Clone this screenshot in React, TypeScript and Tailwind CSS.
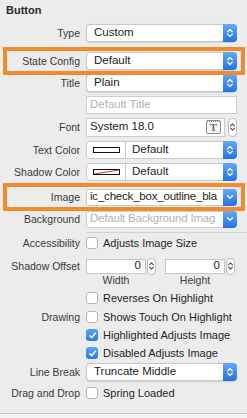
import React from "react";

const FONT = { fontFamily: '"Liberation Sans", Arial, sans-serif' };

function UpDown({ color = "white", w = 8, h = 12 }: { color?: string; w?: number; h?: number }) {
  return (
    <svg width={w} height={h} viewBox="0 0 8 12" fill="none">
      <path d="M1.8 4.8 L4 2.4 L6.2 4.8" stroke={color} strokeWidth="1.3" strokeLinecap="round" strokeLinejoin="round" />
      <path d="M1.8 7.2 L4 9.6 L6.2 7.2" stroke={color} strokeWidth="1.3" strokeLinecap="round" strokeLinejoin="round" />
    </svg>
  );
}

function Down() {
  return (
    <svg width="8" height="8" viewBox="0 0 8 8" fill="none">
      <path d="M1.6 2.8 L4 5.2 L6.4 2.8" stroke="white" strokeWidth="1.4" strokeLinecap="round" strokeLinejoin="round" />
    </svg>
  );
}

function BlueBtn({ single = false }: { single?: boolean }) {
  return (
    <div className="w-[14px] shrink-0 self-stretch -my-px -mr-px rounded-r-[4px] bg-gradient-to-b from-[#62a9fb] to-[#1f72ea] flex items-center justify-center">
      {single ? <Down /> : <UpDown />}
    </div>
  );
}

function Label({ children }: { children?: React.ReactNode }) {
  return (
    <div className="w-[80px] shrink-0 text-right text-[10.5px] text-[#3a3a3a] whitespace-nowrap leading-none">
      {children}
    </div>
  );
}

function Popup({ text, h = 18 }: { text: string; h?: number }) {
  return (
    <div
      className="ml-[6px] w-[151px] flex items-stretch bg-white border border-[#c9c9c9] rounded-[4px] shadow-[0_0.5px_1px_rgba(0,0,0,0.12)]"
      style={{ height: h }}
    >
      <div className="flex-1 flex items-center pl-[7px] text-[11.5px] text-[#1e1e1e] overflow-hidden whitespace-nowrap">{text}</div>
      <BlueBtn />
    </div>
  );
}

function SmallStepper({ h = 18 }: { h?: number }) {
  return (
    <div
      className="w-[9px] bg-white border border-[#bdbdbd] rounded-[4px] flex items-center justify-center"
      style={{ height: h }}
    >
      <UpDown color="#555" w={7} h={12} />
    </div>
  );
}

function Check({ checked = false }: { checked?: boolean }) {
  if (checked) {
    return (
      <div className="w-[12px] h-[12px] rounded-[3px] bg-gradient-to-b from-[#5aa3fa] to-[#2479ee] flex items-center justify-center shrink-0">
        <svg width="9" height="9" viewBox="0 0 9 9" fill="none">
          <path d="M1.8 4.8 L3.7 6.7 L7.2 2.2" stroke="white" strokeWidth="1.5" strokeLinecap="round" strokeLinejoin="round" />
        </svg>
      </div>
    );
  }
  return <div className="w-[12px] h-[12px] rounded-[3px] bg-white border border-[#b5b5b5] shrink-0" />;
}

function CheckRow({ label, text, checked, cls }: { label?: string; text: string; checked?: boolean; cls: string }) {
  return (
    <div className={`flex items-center ${cls}`}>
      <Label>{label}</Label>
      <div className="ml-[6px] flex items-center">
        <Check checked={checked} />
        <span className="ml-[5px] text-[11px] text-[#1e1e1e] whitespace-nowrap leading-none">{text}</span>
      </div>
    </div>
  );
}

function Highlight() {
  return (
    <div className="absolute left-[3px] right-[2px] -top-[4px] -bottom-[4px] border-[4px] border-[#f58a2b] pointer-events-none" />
  );
}

function ColorRow({ label, cls, none = false }: { label: string; cls: string; none?: boolean }) {
  return (
    <div className={`flex items-center ${cls}`}>
      <Label>{label}</Label>
      <div className="ml-[6px] w-[151px] h-[18px] flex items-stretch bg-white border border-[#c9c9c9] rounded-[4px]">
        <div className="w-[39px] flex items-center justify-center border-r border-[#c9c9c9]">
          <div className="relative w-[27px] h-[6px] border border-[#111] bg-white overflow-hidden">
            {none && (
              <svg className="absolute inset-0" width="25" height="4" viewBox="0 0 25 4" preserveAspectRatio="none">
                <line x1="0" y1="4" x2="25" y2="0" stroke="#e0303a" strokeWidth="1" />
              </svg>
            )}
          </div>
        </div>
        <div className="flex-1 flex items-center pl-[6px] text-[11.5px] text-[#1e1e1e]">Default</div>
        <BlueBtn />
      </div>
    </div>
  );
}

function OffsetField() {
  return (
    <div className="flex items-center">
      <div className="w-[60px] h-[15px] bg-white border border-[#c6c6c6] flex items-center justify-end pr-[4px] text-[11.5px] text-[#1e1e1e] leading-none">0</div>
      <div className="ml-[1px]">
        <SmallStepper h={17} />
      </div>
    </div>
  );
}

export default function App() {
  return (
    <div className="w-[247px] h-[418px] overflow-hidden bg-[#ececec] flex flex-col" style={FONT}>
      <div className="h-[20px] flex items-center pl-[6px] text-[11px] font-bold text-[#2a2a2a]">Button</div>

      <div className="flex items-center h-[20px] mt-[3px]">
        <Label>Type</Label>
        <Popup text="Custom" />
      </div>

      <div className="relative flex items-center h-[20px] mt-[8px]">
        <Label>State Config</Label>
        <Popup text="Default" />
        <Highlight />
      </div>

      <div className="flex items-center h-[20px] mt-[2px]">
        <Label>Title</Label>
        <Popup text="Plain" />
      </div>

      <div className="flex items-center h-[20px] mt-[2px]">
        <Label></Label>
        <div className="ml-[6px] w-[151px] h-[18px] bg-white border border-[#cdcdcd] flex items-center pl-[3px] text-[11.5px] text-[#b3b3b3] whitespace-nowrap">
          Default Title
        </div>
      </div>

      <div className="flex items-center h-[20px] mt-[2px]">
        <Label>Font</Label>
        <div className="ml-[6px] w-[139px] h-[19px] bg-white border border-[#cdcdcd] flex items-center pl-[3px] pr-[3px] text-[11.5px] text-[#1e1e1e]">
          <span className="flex-1 whitespace-nowrap">System 18.0</span>
          <div className="w-[15px] h-[14px] border border-[#8a8a8a] rounded-[2px] bg-[#f4f4f4] flex flex-col items-center overflow-hidden">
            <div className="w-full h-[2px] border-b border-dotted border-[#8a8a8a]" />
            <span className="text-[11px] leading-[11px] font-bold text-[#6d6d6d]" style={{ fontFamily: '"Liberation Serif", serif' }}>T</span>
          </div>
        </div>
        <div className="ml-[3px]">
          <SmallStepper h={19} />
        </div>
      </div>

      <ColorRow label="Text Color" cls="h-[20px] mt-[3px]" />
      <ColorRow label="Shadow Color" cls="h-[20px] mt-[2px]" none />

      <div className="relative flex items-center h-[20px] mt-[5px]">
        <Label>Image</Label>
        <div className="ml-[6px] w-[151px] h-[17px] flex items-stretch bg-white border border-[#c9c9c9] rounded-[3px]">
          <div className="flex-1 flex items-center pl-[3px] text-[11.5px] tracking-[-0.2px] text-[#1e1e1e] overflow-hidden whitespace-nowrap">ic_check_box_outline_bla</div>
          <BlueBtn single />
        </div>
        <Highlight />
      </div>

      <div className="flex items-center h-[20px] mt-[2px]">
        <Label>Background</Label>
        <div className="ml-[6px] w-[151px] h-[17px] flex items-stretch bg-white border border-[#cdcdcd] rounded-[3px]">
          <div className="flex-1 flex items-center pl-[3px] text-[11.5px] tracking-[-0.2px] text-[#b3b3b3] overflow-hidden whitespace-nowrap">Default Background Imag</div>
          <BlueBtn single />
        </div>
      </div>

      <div className="h-px bg-[#d3d3d3] mt-[3px] ml-[86px]" />

      <CheckRow label="Accessibility" text="Adjusts Image Size" cls="h-[20px]" />

      <div className="flex items-center h-[16px] mt-[5px]">
        <Label>Shadow Offset</Label>
        <div className="ml-[6px] flex items-center gap-[9px]">
          <OffsetField />
          <OffsetField />
        </div>
      </div>

      <div className="flex items-center h-[12px] text-[10.5px] text-[#3a3a3a] leading-none">
        <div className="w-[86px] shrink-0" />
        <div className="w-[60px] text-center">Width</div>
        <div className="w-[19px] shrink-0" />
        <div className="w-[60px] text-center">Height</div>
      </div>

      <CheckRow text="Reverses On Highlight" cls="h-[18px] mt-[3px]" />
      <CheckRow label="Drawing" text="Shows Touch On Highlight" cls="h-[18px] mt-[1px]" />
      <CheckRow text="Highlighted Adjusts Image" checked cls="h-[18px]" />
      <CheckRow text="Disabled Adjusts Image" checked cls="h-[18px]" />

      <div className="flex items-center h-[20px]">
        <Label>Line Break</Label>
        <Popup text="Truncate Middle" />
      </div>

      <CheckRow label="Drag and Drop" text="Spring Loaded" cls="h-[18px] mt-[2px]" />

      <div className="h-px bg-[#c6c6c6] mt-[11px]" />
      <div className="flex-1 bg-[#f3f3f3]" />
    </div>
  );
}
